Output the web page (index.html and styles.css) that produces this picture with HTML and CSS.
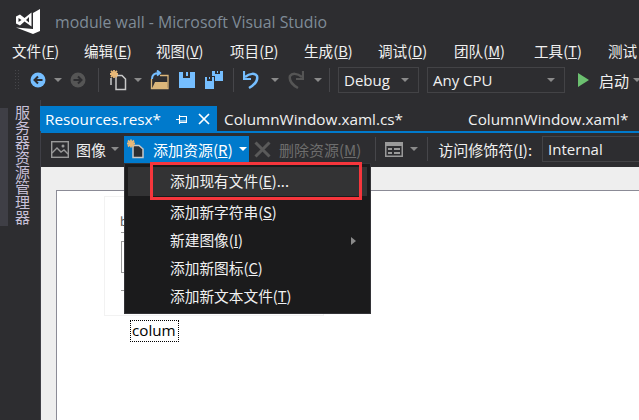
FILE: index.html
```html
<!DOCTYPE html>
<html lang="zh">
<head>
<meta charset="utf-8">
<title>module wall - Microsoft Visual Studio</title>
<link rel="stylesheet" href="styles.css">
</head>
<body>
<div class="app">
  <header class="titlebar">
    <svg class="logo" width="26" height="27" viewBox="15 8 26 27"><path fill="#fff" fill-rule="evenodd" d="M33 13L40 9V31L33 34L16 27.500L33 29ZM16 16.500L20 14.500L24.500 18L31.500 12.500V26.500L24.500 21.500L20 25.500L16 23.500ZM18.500 18V22L21.500 20ZM29 17L26 20L29 22.500Z"/></svg>
    <span class="title">module wall - Microsoft Visual Studio</span>
  </header>
  <nav class="menubar">
    <span class="m m1">文件(<u>F</u>)</span>
    <span class="m m2">编辑(<u>E</u>)</span>
    <span class="m m3">视图(<u>V</u>)</span>
    <span class="m m4">项目(<u>P</u>)</span>
    <span class="m m5">生成(<u>B</u>)</span>
    <span class="m m6">调试(<u>D</u>)</span>
    <span class="m m7">团队(<u>M</u>)</span>
    <span class="m m8">工具(<u>T</u>)</span>
    <span class="m">测试</span>
  </nav>
  <div class="toolbar">
    <span class="grip"></span>
    <svg class="i back" width="16" height="16" viewBox="0 0 16 16"><circle cx="8" cy="8" r="7.500" fill="#75beff"/><path d="M12.500 8H5M8 4.500L4.500 8L8 11.500" fill="none" stroke="#2d2d30" stroke-width="2"/></svg>
    <span class="drop d1"></span>
    <svg class="i fwd" width="16" height="16" viewBox="0 0 16 16"><circle cx="8" cy="8" r="7.500" fill="#555"/><path d="M3.500 8H11M8 4.500L11.500 8L8 11.500" fill="none" stroke="#2d2d30" stroke-width="2"/></svg>
    <span class="sep s1"></span>
    <svg class="i newi" width="20" height="22" viewBox="0 0 20 22"><path d="M8 6.500H14L17.500 10V20.500H8Z" fill="#2d2d30" stroke="#c8c8c8" stroke-width="1.500"/><path d="M3 16V9" stroke="#c8c8c8" stroke-width="1.500"/><path d="M6 1V9M2 5H10M3 2L9 8M9 2L3 8" stroke="#e8b878" stroke-width="1.800"/></svg>
    <span class="drop d2"></span>
    <svg class="i open" width="19" height="20" viewBox="0 0 19 20"><path d="M1.500 9V18.500H18V5.500H10" fill="none" stroke="#dcb67a" stroke-width="1.300"/><path d="M2 18.500L5 12H17.500V18.500Z" fill="#dcb67a"/><path d="M2 9C2 4 5 3 9 3M7 .5L10 3L7 5.500" fill="none" stroke="#75beff" stroke-width="2"/></svg>
    <svg class="i save" width="16" height="16" viewBox="0 0 16 16"><path fill="#75beff" fill-rule="evenodd" d="M0 0H16V16H0ZM4 0V6H11V0H9V4H7V0Z"/></svg>
    <svg class="i saveall" width="18" height="18" viewBox="0 0 18 18"><path fill="#75beff" fill-rule="evenodd" d="M7 0H18V10H10V5H7ZM10 0V3H15V0H13V2H12V0Z"/><path fill="#75beff" fill-rule="evenodd" d="M0 6H9V18H0ZM2 6V10H7V6H5V8H4V6Z"/></svg>
    <span class="sep s2"></span>
    <svg class="i undo" width="16" height="20" viewBox="0 0 16 20"><path d="M6 18C13 14 15 10 14 6C12 3 7 3 2 7" fill="none" stroke="#75beff" stroke-width="2.500"/><path d="M1 1V9H8" fill="none" stroke="#75beff" stroke-width="2.200"/></svg>
    <span class="drop d3"></span>
    <svg class="i redo" width="16" height="20" viewBox="0 0 16 20"><path d="M10 18C3 14 1 10 2 6C4 3 9 3 14 7" fill="none" stroke="#555" stroke-width="2.500"/><path d="M15 1V9H8" fill="none" stroke="#555" stroke-width="2.200"/></svg>
    <span class="drop d4"></span>
    <span class="sep s3"></span>
    <span class="combo debug"><span>Debug</span><span class="drop"></span></span>
    <span class="combo cpu"><span>Any CPU</span><span class="drop"></span></span>
    <span class="play"></span>
    <span class="start">启动</span>
    <span class="drop d5"></span>
  </div>
  <div class="main">
    <aside class="side">
      <span class="strip"></span>
      <span class="vtext">服务器资源管理器</span>
    </aside>
    <section class="doc">
      <div class="tabs">
        <div class="tab active">
          <span class="tabname">Resources.resx*</span>
          <svg class="pin" width="11" height="11" viewBox="0 0 11 11"><path d="M0 5.500H3.500M3.500 1V10M3.500 2.500H10.500V8.500H3.500M3.500 7H10.500" fill="none" stroke="#fff" stroke-width="1.100"/></svg>
          <svg class="close" width="12" height="12" viewBox="0 0 12 12"><path d="M1 1L11 11M11 1L1 11" stroke="#fff" stroke-width="1.700"/></svg>
        </div>
        <span class="tab t2">ColumnWindow.xaml.cs*</span>
        <span class="tab t3">ColumnWindow.xaml*</span>
      </div>
      <div class="tools2">
        <svg class="imgicon" width="18" height="17" viewBox="0 0 18 17"><rect x=".7" y=".7" width="16.600" height="15.600" fill="none" stroke="#999" stroke-width="1.400"/><path d="M1 12L6 7L10 11L13 9L17 13" fill="none" stroke="#999" stroke-width="1.400"/><circle cx="12" cy="5" r="1.500" fill="#999"/></svg>
        <span class="label">图像</span>
        <span class="drop d6"></span>
        <span class="addbtn">
          <svg class="addicon" width="20" height="20" viewBox="0 0 20 20"><path d="M7 6.500H13L17 10V18.500H7Z" fill="#2d2d30" stroke="#c8c8c8" stroke-width="1.500"/><path d="M5 .5V8.500M1 4.500H9M2 1.500L8 7.500M8 1.500L2 7.500" stroke="#e8b878" stroke-width="1.800"/></svg>
          <span class="addlabel">添加资源(<u>R</u>)</span>
          <span class="drop white"></span>
        </span>
        <svg class="del" width="17" height="17" viewBox="0 0 17 17"><path d="M1.500 1.500L15.500 15.500M15.500 1.500L1.500 15.500" stroke="#5a5a5a" stroke-width="3"/></svg>
        <span class="label off">删除资源(<u>M</u>)</span>
        <span class="sep s4"></span>
        <svg class="grid" width="18" height="15" viewBox="0 0 18 15"><path fill="#999" fill-rule="evenodd" d="M0 0H18V15H0ZM1.500 4V13.500H16.500V4Z"/><path fill="#999" d="M3 6H7V8H3ZM9 6H15V8H9ZM3 10H7V12H3ZM9 10H15V12H9Z"/></svg>
        <span class="drop d7"></span>
        <span class="sep s5"></span>
        <span class="label access">访问修饰符(<u>I</u>):</span>
        <span class="combo internal">Internal</span>
      </div>
      <div class="stage">
        <div class="canvas">
          <div class="frame"></div>
          <span class="frag-b">b</span>
          <span class="frag-box"></span>
          <span class="tick t-a"></span>
          <span class="tick t-b"></span>
          <span class="colum">colum</span>
        </div>
      </div>
    </section>
  </div>
  <div class="menu">
    <div class="item hot">添加现有文件(<u>E</u>)...</div>
    <div class="item">添加新字符串(<u>S</u>)</div>
    <div class="item">新建图像(<u>I</u>)<span class="arrow"></span></div>
    <div class="item">添加新图标(<u>C</u>)</div>
    <div class="item">添加新文本文件(<u>T</u>)</div>
  </div>
  <div class="redbox"></div>
</div>
</body>
</html>
```

FILE: styles.css
```css
* { box-sizing: border-box; }
html, body { margin: 0; padding: 0; }
body {
  width: 639px; height: 420px; overflow: hidden;
  background: #2d2d30; color: #f1f1f1;
  font-family: "Noto Sans CJK SC", "Open Sans", sans-serif;
  font-size: 15px;
}
u { text-underline-offset: 1px; }
.app { position: relative; width: 639px; height: 420px; overflow: hidden; display: flex; flex-direction: column; }
.titlebar { height: 38px; display: flex; align-items: flex-start; padding: 8px 0 0 15px; }
.logo { flex: none; }
.title { margin-left: 14px; margin-top: 2px; font: 15.850px/24px "Open Sans", sans-serif; color: #7f8b97; white-space: nowrap; }
.menubar { height: 26px; display: flex; align-items: center; padding-left: 12px; white-space: nowrap; line-height: 24px; font-size: 14.600px; }
.m { flex: none; }
.m1 { width: 72px; } .m2 { width: 72px; } .m3 { width: 74px; } .m4 { width: 74px; }
.m5 { width: 74px; } .m6 { width: 76px; } .m7 { width: 80px; } .m8 { width: 74px; }
.toolbar { height: 36px; display: flex; align-items: center; padding-left: 14px; padding-bottom: 4px; white-space: nowrap; }
.grip { width: 6px; height: 22px; flex: none; background: radial-gradient(circle, #46464a 1px, transparent 1px) 0 0 / 3px 3px; }
.i { flex: none; display: block; }
.back { margin-left: 10px; }
.drop { display: inline-block; flex: none; width: 0; height: 0; border: 4px solid transparent; border-top: 4px solid #8a8a8a; border-bottom: 0; }
.drop.white { border-top-color: #fff; }
.d1 { margin-left: 8px; }
.fwd { margin-left: 8px; }
.sep { flex: none; width: 1px; height: 24px; background: #46464a; }
.s1 { margin-left: 12px; }
.newi { margin-left: 9px; }
.d2 { margin-left: 6px; }
.open { margin-left: 8px; }
.save { margin-left: 10px; }
.saveall { margin-left: 10px; }
.s2 { margin-left: 10px; }
.undo { margin-left: 9px; }
.d3 { margin-left: 12px; }
.redo { margin-left: 9px; }
.d4 { margin-left: 10px; }
.s3 { margin-left: 7px; }
.combo { flex: none; height: 26px; border: 1px solid #434346; display: flex; align-items: center; justify-content: space-between; font-family: "Open Sans", sans-serif; font-size: 15px; padding: 0 9px 0 5px; color: #f1f1f1; }
.debug { width: 81px; margin-left: 8px; }
.cpu { width: 138px; margin-left: 8px; }
.play { flex: none; margin-left: 13px; width: 0; height: 0; border-left: 11px solid #6cc070; border-top: 7.500px solid transparent; border-bottom: 7.500px solid transparent; }
.start { margin-left: 10px; flex: none; }
.d5 { margin-left: 4px; }
.main { flex: 1; display: flex; min-height: 0; }
.side { width: 41px; flex: none; border-right: 1px solid #3f3f46; display: flex; align-items: flex-start; padding-top: 8px; }
.strip { width: 8px; height: 118px; background: #3f3f46; flex: none; }
.vtext { writing-mode: vertical-rl; margin-left: 7px; margin-top: -3px; font-size: 15px; line-height: 14px; color: #c8c0d8; white-space: nowrap; flex: none; }
.doc { flex: 1; min-width: 0; display: flex; flex-direction: column; padding-top: 6px; }
.tabs { height: 27px; flex: none; display: flex; border-bottom: 2px solid #007acc; font-family: "Open Sans", sans-serif; font-size: 15.300px; white-space: nowrap; }
.tab { flex: none; line-height: 26px; }
.active { width: 177px; height: 25px; background: #007acc; display: flex; align-items: center; color: #fff; padding: 1px 0 0 5px; margin-left: -1px; }
.tabname { width: 131px; flex: none; }
.pin { flex: none; }
.close { margin-left: 11px; flex: none; }
.t2 { margin-left: 7px; width: 244px; color: #f1f1f1; }
.t3 { color: #f1f1f1; }
.tools2 { height: 34px; flex: none; display: flex; align-items: center; white-space: nowrap; padding: 0 0 2px 10px; }
.imgicon { flex: none; }
.label { flex: none; margin-left: 7px; }
.d6 { margin-left: 5px; }
.addbtn { flex: none; margin-left: 5px; width: 125px; height: 27px; background: #007acc; display: flex; align-items: center; padding-left: 2px; color: #fff; }
.addicon { flex: none; }
.addlabel { margin-left: 7px; }
.addbtn .drop { margin-left: 6px; }
.del { margin-left: 5px; flex: none; }
.off { color: #6d6d6d; margin-left: 8px; }
.s4 { margin-left: 14px; }
.grid { margin-left: 9px; flex: none; }
.d7 { margin-left: 7px; }
.s5 { margin-left: 9px; }
.access { margin-left: 10px; color: #f1f1f1; }
.internal { width: 120px; margin-left: 10px; padding-left: 5px; }
.stage { flex: 1; background: #eeeeee; padding: 23px 0 0 15px; min-height: 0; }
.canvas { position: relative; height: 100%; background: #fff; border-top: 1px solid #8b8b96; border-left: 1px solid #8b8b96; }
.frame { position: absolute; left: 47px; top: 5px; width: 220px; height: 120px; border: 1px solid #f2f2f2; }
.frag-b { position: absolute; left: 63px; top: 23px; font-size: 12px; color: #555; line-height: 14px; }
.frag-box { position: absolute; left: 64px; top: 50px; width: 4px; height: 32px; border: 1px solid #999; border-right: 0; }
.tick { position: absolute; left: 64px; width: 5px; height: 1px; background: #999; }
.t-a { top: 41px; } .t-b { top: 99px; }
.colum { position: absolute; left: 73px; top: 129px; width: 49px; height: 22px; border: 1px dotted #000; color: #000; font-family: "Open Sans", sans-serif; font-size: 15.200px; line-height: 18px; padding-left: 1px; }
.menu { position: absolute; left: 124px; top: 163px; width: 247px; height: 151px; background: #1b1b1c; border: 1px solid #333337; padding: 3px 3px 0; font-size: 14.700px; }
.item { height: 28px; line-height: 26px; padding-left: 42px; color: #f1f1f1; position: relative; white-space: nowrap; }
.hot { height: 29px; line-height: 28px; background: #333334; margin-bottom: 3px; }
.arrow { position: absolute; right: 11px; top: 10px; width: 0; height: 0; border-left: 5px solid #8a8a8a; border-top: 4.500px solid transparent; border-bottom: 4.500px solid transparent; }
.redbox { position: absolute; left: 150px; top: 162px; width: 212px; height: 38px; border: 3px solid #f6363c; }
```
